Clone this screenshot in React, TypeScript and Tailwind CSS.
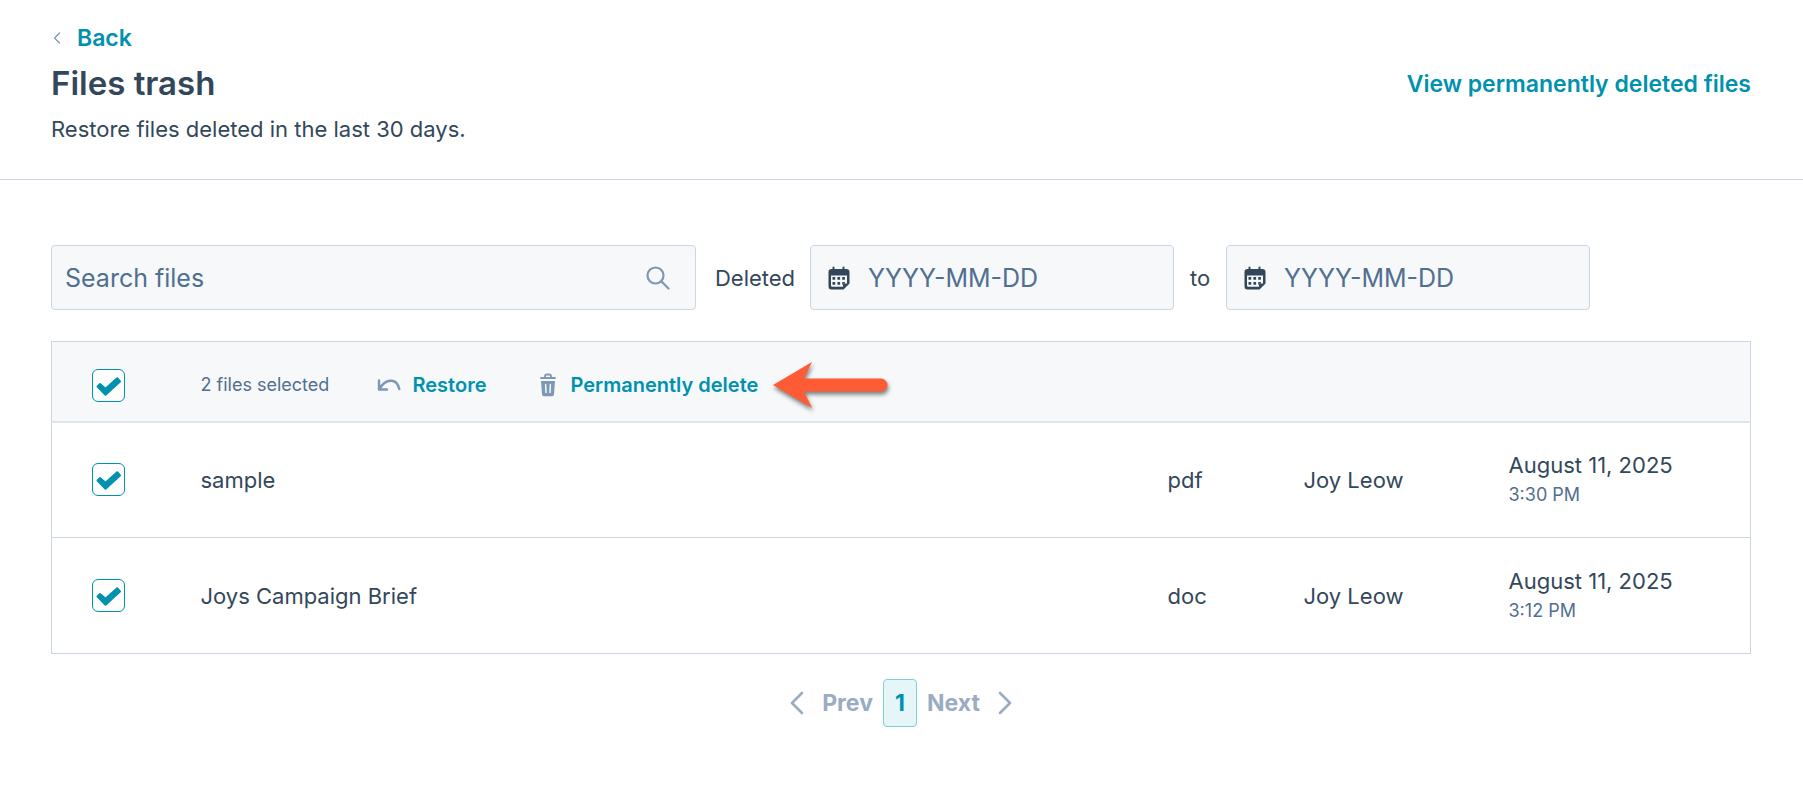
import { useState } from 'react';

interface TrashedFile {
  id: string;
  name: string;
  type: string;
  deletedBy: string;
  date: string;
  time: string;
}

const FILES: TrashedFile[] = [
  { id: 'f1', name: 'sample', type: 'pdf', deletedBy: 'Joy Leow', date: 'August 11, 2025', time: '3:30 PM' },
  { id: 'f2', name: 'Joys Campaign Brief', type: 'doc', deletedBy: 'Joy Leow', date: 'August 11, 2025', time: '3:12 PM' },
];

// ─── Icons ────────────────────────────────────────────────────────────────────

function ChevronIcon({ className, flip, width }: { className: string; flip?: boolean; width: number }) {
  return (
    <svg className={className} viewBox="0 0 14 24" fill="none" stroke="currentColor" strokeWidth={width} strokeLinecap="round" strokeLinejoin="round" aria-hidden="true">
      <path d={flip ? 'M2 2l10 10L2 22' : 'M12 2L2 12l10 10'} />
    </svg>
  );
}

function SearchIcon() {
  return (
    <svg className="w-6 h-6 shrink-0 text-[#7c98b6]" viewBox="0 0 24 24" fill="none" stroke="currentColor" strokeWidth={2.2} strokeLinecap="round" aria-hidden="true">
      <circle cx="9.5" cy="9.5" r="8" />
      <path d="M15.5 15.5L22.5 22.5" />
    </svg>
  );
}

function CalendarIcon() {
  return (
    <svg className="w-[22px] h-6 shrink-0" viewBox="0 0 22 24" aria-hidden="true">
      <path fill="#33475b" d="M4.500 3V1.500a1 1 0 0 1 2 0V3h8V1.500a1 1 0 0 1 2 0V3H18.500a3 3 0 0 1 3 3v11.500L15.500 23.500H3.500a3 3 0 0 1-3-3V6a3 3 0 0 1 3-3z" />
      <path fill="#f6f8fa" d="M3 9.500h16v8h-2.500a1.500 1.500 0 0 0-1.500 1.500v1.800H4.200A1.200 1.200 0 0 1 3 19.600z" />
      <path fill="#33475b" d="M4.500 11h2.700v2.700H4.500zM9.400 11h2.700v2.700H9.400zM14.200 11h2.700v2.700h-2.700zM4.500 16h2.700v2.700H4.500zM9.400 16h2.700v2.700H9.400zM14.200 16h2.700v1.500h-1.200v1.200h-1.500z" />
    </svg>
  );
}

function UndoIcon() {
  return (
    <svg className="w-6 h-3 shrink-0 text-[#7c98b6]" viewBox="0 0 24 12" fill="none" stroke="currentColor" strokeWidth={2.4} strokeLinecap="round" strokeLinejoin="round" aria-hidden="true">
      <path d="M2 1.500v9h8M2.500 10C6 3.500 11 1.300 15 1.800c3.500.4 6 3.200 7.300 8.200" />
    </svg>
  );
}

function TrashIcon() {
  return (
    <svg className="w-4 h-6 shrink-0" viewBox="0 0 16 24" aria-hidden="true">
      <path fill="none" stroke="#7c98b6" strokeWidth="1.800" strokeLinecap="round" d="M1 5h14M5 4.500V3.200A1.700 1.700 0 0 1 6.700 1.500h2.600A1.700 1.700 0 0 1 11 3.200v1.300" />
      <path fill="#7c98b6" d="M1 8h14l-1 13.500a2 2 0 0 1-2 1.800H4a2 2 0 0 1-2-1.800z" />
      <path stroke="#f6f8fa" strokeWidth="1.500" strokeLinecap="round" d="M5.600 11.500l.4 8M10.400 11.500l-.4 8" />
    </svg>
  );
}

function ArrowMarker() {
  return (
    <svg className="w-32 h-14 shrink-0 overflow-visible drop-shadow-[1px_3px_2px_rgba(0,0,0,0.5)]" viewBox="0 0 128 56" aria-hidden="true">
      <path fill="#ff5c35" d="M1 28L40 5L32 21.500H109a6.500 6.500 0 0 1 0 13H32L40 51z" />
    </svg>
  );
}

// ─── Controls ─────────────────────────────────────────────────────────────────

function Checkbox({ label, checked, onChange }: { label: string; checked: boolean; onChange: () => void }) {
  return (
    <label className="relative block w-[33px] h-[33px] ml-10">
      <input
        type="checkbox"
        aria-label={label}
        checked={checked}
        onChange={onChange}
        className="block w-full h-full appearance-none rounded-md border border-[#0091ae] bg-white"
      />
      {checked && (
        <svg className="absolute inset-0 pointer-events-none" viewBox="0 0 33 33" aria-hidden="true">
          <path fill="#0091ae" stroke="#0091ae" strokeWidth="2" strokeLinejoin="round" d="M5.500 17.500L8 15L13.500 19.800L25.200 9.200L28 12.500L13.500 25.800z" />
        </svg>
      )}
    </label>
  );
}

function DateField({ label }: { label: string }) {
  return (
    <label className="flex items-center gap-[18px] w-[364px] h-[65px] pl-[17px] pr-3 rounded border border-[#cbd6e2] bg-[#f6f8fa]">
      <CalendarIcon />
      <input
        type="text"
        aria-label={label}
        placeholder="YYYY-MM-DD"
        className="min-w-0 flex-1 bg-transparent text-[25px] outline-none placeholder:text-[#516f90]"
      />
    </label>
  );
}

// ─── Page ─────────────────────────────────────────────────────────────────────

export default function App() {
  const [selected, setSelected] = useState<string[]>(FILES.map((f) => f.id));

  const allSelected = selected.length === FILES.length;

  const toggle = (id: string) =>
    setSelected((prev) => (prev.includes(id) ? prev.filter((x) => x !== id) : [...prev, id]));

  const toggleAll = () => setSelected(allSelected ? [] : FILES.map((f) => f.id));

  return (
    <div className="bg-white text-[#33475b] text-[22px] leading-7 font-['Inter',sans-serif]">
      <header className="flex items-start justify-between pl-[51px] pr-[52px] pt-6 pb-9 border-b border-[#cbd6e2]">
        <div>
          <a href="#" className="flex items-center gap-4 pl-[2px] text-[23px] font-semibold text-[#0091ae]">
            <ChevronIcon className="w-2 h-3 text-[#7c98b6]" width={2.5} />
            Back
          </a>
          <h1 className="mt-[11px] text-[33px] leading-10 font-semibold">Files trash</h1>
          <p className="mt-3">Restore files deleted in the last 30 days.</p>
        </div>
        <a href="#" className="mt-[46px] text-[23px] font-semibold text-[#0091ae]">View permanently deleted files</a>
      </header>

      <main className="pl-[51px] pr-[52px] pt-[65px]">
        <div className="flex items-center">
          <label className="flex items-center w-[645px] h-[65px] pl-[13px] pr-[25px] rounded border border-[#cbd6e2] bg-[#f6f8fa]">
            <input
              type="search"
              aria-label="Search files"
              placeholder="Search files"
              className="min-w-0 flex-1 bg-transparent text-[25px] outline-none placeholder:text-[#516f90]"
            />
            <SearchIcon />
          </label>
          <span className="w-[114px] pl-1 text-center">Deleted</span>
          <DateField label="Deleted from" />
          <span className="w-[52px] text-center">to</span>
          <DateField label="Deleted to" />
        </div>

        <table className="mt-[31px] w-full table-fixed border-collapse border border-[#cbd6e2] text-left">
          <colgroup>
            <col className="w-[149px]" />
            <col />
            <col className="w-[136px]" />
            <col className="w-[205px]" />
            <col className="w-[242px]" />
          </colgroup>
          <thead>
            <tr className="h-20 border-b-2 border-[#dfe3eb] bg-[#f6f8fa]">
              <th className="p-0 pt-2">
                <Checkbox label="Select all files" checked={allSelected} onChange={toggleAll} />
              </th>
              <th colSpan={4} className="p-0 pt-2 text-xl font-normal">
                <div className="flex items-center">
                  <span className="w-[176px] text-lg text-[#516f90]">{selected.length} files selected</span>
                  <button className="flex items-center gap-3 w-[163px] font-semibold text-[#0091ae]">
                    <UndoIcon />
                    Restore
                  </button>
                  <button className="flex items-center gap-[15px] font-semibold text-[#0091ae]">
                    <TrashIcon />
                    Permanently delete
                  </button>
                  <span className="ml-[14px]">
                    <ArrowMarker />
                  </span>
                </div>
              </th>
            </tr>
          </thead>
          <tbody>
            {FILES.map((file) => (
              <tr key={file.id} className="h-[116px] border-b border-[#cbd6e2]">
                <td className="p-0">
                  <Checkbox
                    label={`Select ${file.name}`}
                    checked={selected.includes(file.id)}
                    onChange={() => toggle(file.id)}
                  />
                </td>
                <td className="p-0">{file.name}</td>
                <td className="p-0">{file.type}</td>
                <td className="p-0">{file.deletedBy}</td>
                <td className="p-0">
                  <div>{file.date}</div>
                  <div className="mt-0.5 text-lg text-[#516f90]">{file.time}</div>
                </td>
              </tr>
            ))}
          </tbody>
        </table>

        <nav aria-label="Pagination" className="flex items-center justify-center mt-[25px] text-[23px] font-bold text-[#99acc2]">
          <button disabled className="flex items-center gap-[18px] mr-2.5">
            <ChevronIcon className="w-[14px] h-6" width={2.6} />
            Prev
          </button>
          <button aria-current="page" className="w-[34px] h-12 rounded border border-[#7fd1de] bg-[#e5f5f8] text-[#0091ae]">
            1
          </button>
          <button disabled className="flex items-center gap-[18px] ml-2.5">
            Next
            <ChevronIcon className="w-[14px] h-6" width={2.6} flip />
          </button>
        </nav>
      </main>
    </div>
  );
}
